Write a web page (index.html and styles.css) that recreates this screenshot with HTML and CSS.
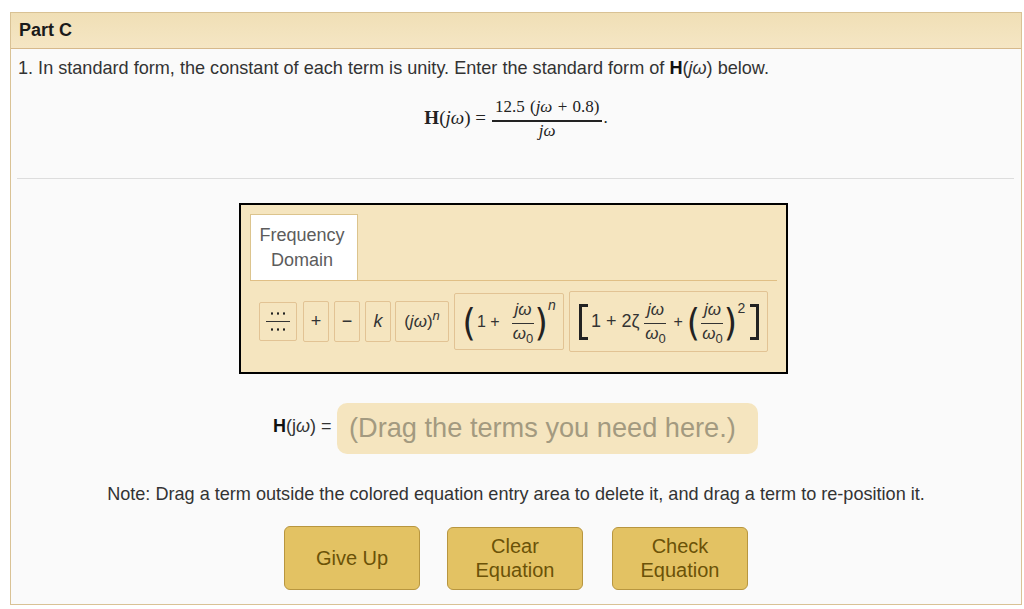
FILE: index.html
```html
<!DOCTYPE html>
<html lang="en">

<head>
  <meta charset="UTF-8">
  <meta name="viewport" content="width=device-width, initial-scale=1.0">
  <title>Part C</title>
  <link rel="stylesheet" href="styles.css">
</head>

<body>
  <div class="panel">
    <div class="panelhead">Part C</div>

    <p class="question">1. In standard form, the constant of each term is unity. Enter the standard form of <b>H</b>(<i>jω</i>) below.</p>

    <div class="formula">
      <span class="formula-left"><b>H</b>(<i>jω</i>) =</span>
      <span class="formula-frac">
        <span class="formula-num">12.5 (<i>jω</i> + 0.8)</span>
        <span class="formula-den"><i>jω</i></span>
      </span>
      <span class="formula-dot">.</span>
    </div>

    <hr class="divider">

    <div class="toolarea">
      <div class="tabrow">
        <div class="tab">Frequency<br>Domain</div>
      </div>
      <div class="terms">
        <div class="term term-blank">
          <span class="dots"></span>
          <span class="dotline"></span>
          <span class="dots"></span>
        </div>
        <div class="term term-small">+</div>
        <div class="term term-small">−</div>
        <div class="term term-small"><i>k</i></div>
        <div class="term term-jw"><span>(<i>jω</i>)<sup><i>n</i></sup></span></div>

        <div class="term term-big term-one">
          <span class="paren paren-open">(</span>
          <span class="plain-one">1 +</span>
          <span class="frac"><span class="top"><i>jω</i></span><span class="bottom"><i>ω</i><sub>0</sub></span></span>
          <span class="paren paren-close">)</span>
          <span class="power"><i>n</i></span>
        </div>

        <div class="term term-big term-two">
          <span class="bracket bracket-open"></span>
          <span class="plain">1 + 2ζ</span>
          <span class="frac"><span class="top"><i>jω</i></span><span class="bottom"><i>ω</i><sub>0</sub></span></span>
          <span class="plain-plus">+</span>
          <span class="paren paren-open">(</span>
          <span class="frac"><span class="top"><i>jω</i></span><span class="bottom"><i>ω</i><sub>0</sub></span></span>
          <span class="paren paren-close">)</span>
          <span class="power">2</span>
          <span class="bracket bracket-close"></span>
        </div>
      </div>
    </div>

    <div class="answer">
      <span class="answer-label"><b>H</b>(j<i>ω</i>) =</span>
      <div class="dropzone">(Drag the terms you need here.)</div>
    </div>

    <p class="note">Note: Drag a term outside the colored equation entry area to delete it, and drag a term to re-position it.</p>

    <div class="buttonarea">
      <button class="btn btn-giveup" type="button">Give Up</button>
      <button class="btn btn-two" type="button">Clear<br>Equation</button>
      <button class="btn btn-two" type="button">Check<br>Equation</button>
    </div>
  </div>
</body>

</html>
```

FILE: styles.css
```css
html,
body {
  height: 100%;
}

body {
  margin: 0;
  padding: 12px 2px 4px 10px;
  box-sizing: border-box;
  background-color: #ffffff;
  font-family: "Liberation Sans", Arial, sans-serif;
  color: #333333;
  overflow: hidden;
}

.panel {
  height: 593px;
  box-sizing: border-box;
  border: 1px solid #d9c295;
  background-color: #fafafa;
}

.panelhead {
  height: 36px;
  box-sizing: border-box;
  padding: 8px 8px 0;
  font-size: 18px;
  line-height: 18px;
  font-weight: bold;
  color: #1a1a1a;
  background-image: linear-gradient(to bottom, #f0dfb6, #f5e6c4);
  border-bottom: 1px solid #d6b98c;
}

.question {
  margin: 0;
  padding: 9px 7px 0;
  font-size: 18.1px;
  line-height: 20px;
  color: #333333;
}

.question b {
  color: #111111;
}

.formula {
  display: flex;
  justify-content: center;
  align-items: center;
  margin-top: 18px;
  height: 44px;
  font-family: "Liberation Serif", "Times New Roman", serif;
  font-size: 17px;
  color: #222222;
}

.formula-left {
  margin-right: 6px;
  font-size: 19px;
}

.formula-frac {
  display: flex;
  flex-direction: column;
  align-items: center;
  line-height: 20px;
}

.formula-num {
  padding: 0 3px 3px;
  border-bottom: 2px solid #222222;
  word-spacing: 1px;
}

.formula-den {
  line-height: 18px;
}

.formula-dot {
  margin-left: 1px;
}

.divider {
  height: 1px;
  margin: 38px 7px 0 6px;
  border: none;
  background-color: #dddddd;
}

.toolarea {
  width: 549px;
  height: 171px;
  box-sizing: border-box;
  margin: 24px 0 0 228px;
  padding: 9px 9px 0;
  border: 2px solid #000000;
  background-color: #f5e5bf;
}

.tabrow {
  border-bottom: 1px solid #e0bf85;
  height: 66px;
}

.tab {
  width: 108px;
  height: 66px;
  box-sizing: border-box;
  border: 1px solid #dcc48d;
  border-bottom: none;
  background-color: #ffffff;
  font-size: 18px;
  line-height: 25px;
  text-align: center;
  padding: 8px 4px 0 0;
  color: #5c5c5c;
}

.terms {
  display: flex;
  align-items: center;
  height: 81px;
  padding-left: 9px;
  color: #333333;
}

.term {
  display: flex;
  align-items: center;
  justify-content: center;
  box-sizing: border-box;
  height: 41px;
  border: 1px solid #e2c394;
  border-radius: 2px;
  font-size: 18px;
  flex-shrink: 0;
}

.term-blank {
  flex-direction: column;
  width: 38px;
  height: 39px;
  margin-right: 6px;
}

.dots {
  width: 18px;
  height: 3px;
  background-image: radial-gradient(circle, #222222 1px, transparent 1.3px);
  background-size: 6px 3px;
}

.dotline {
  width: 24px;
  height: 1px;
  margin: 6px 0;
  background-color: #333333;
}

.term-small {
  width: 26px;
  margin-right: 5px;
}

.term-jw {
  width: 54px;
  margin-left: -1px;
  font-size: 17px;
}

.term-jw sup {
  font-size: 13px;
  line-height: 0;
}

.term-big {
  justify-content: flex-start;
  font-size: 16px;
  color: #333333;
}

.term-one {
  width: 110px;
  height: 57px;
  margin-left: 5px;
  padding-left: 10px;
}

.term-two {
  width: 199px;
  height: 61px;
  margin-left: 5px;
  padding-left: 9px;
}

.paren {
  display: flex;
  justify-content: center;
  width: 10px;
  font-family: "DejaVu Sans", sans-serif;
  font-size: 34px;
  line-height: 40px;
  color: #222222;
  transform: scaleY(1.1);
}

.term-one .paren-open {
  width: 8px;
}

.plain {
  white-space: nowrap;
  margin: 0 5px 0 3px;
  font-size: 18px;
}

.plain-one {
  white-space: nowrap;
  width: 21px;
  margin: 0 14px 0 4px;
}

.plain-plus {
  width: 8px;
  margin: 0 7px;
}

.frac {
  display: flex;
  flex-direction: column;
  align-items: center;
  width: 22px;
  font-size: 17px;
  line-height: 20px;
}

.frac .top {
  padding-bottom: 3px;
  border-bottom: 1px solid #333333;
  width: 100%;
  text-align: center;
}

.frac sub {
  font-size: 13px;
  line-height: 0;
}

.frac + .paren-close {
  margin-left: 2px;
}

.paren-open + .frac {
  margin-left: 3px;
}

.power {
  align-self: flex-start;
  width: 8px;
  margin: 3px 0 0 2px;
  font-size: 14px;
}

.term-two .power {
  margin-top: 8px;
}

.bracket {
  display: block;
  width: 9px;
  height: 36px;
  box-sizing: border-box;
  border: 3px solid #222222;
  flex-shrink: 0;
}

.bracket-open {
  border-right: none;
}

.bracket-close {
  border-left: none;
  margin-left: 5px;
}

.answer {
  display: flex;
  align-items: center;
  margin: 29px 0 0 262px;
}

.answer-label {
  width: 64px;
  margin-bottom: 5px;
  font-size: 18px;
  color: #333333;
}

.answer-label b {
  color: #111111;
}

.dropzone {
  width: 421px;
  height: 51px;
  box-sizing: border-box;
  padding: 0 12px;
  border-radius: 10px;
  background-color: #f5e5bf;
  font-size: 27.2px;
  line-height: 50px;
  color: #a39a80;
}

.note {
  margin: 30px 0 0;
  text-align: center;
  font-size: 18.1px;
  line-height: 20px;
  color: #333333;
}

.buttonarea {
  display: flex;
  align-items: flex-end;
  margin: 22px 0 0 273px;
}

.btn {
  width: 136px;
  height: 63px;
  padding: 0;
  border: 1px solid #b8963f;
  border-radius: 6px;
  background-color: #e3c263;
  font-family: "Liberation Sans", Arial, sans-serif;
  font-size: 20px;
  line-height: 24px;
  color: #6b5208;
  margin-right: 27px;
}

.btn-two {
  padding-bottom: 2px;
}

.btn + .btn + .btn {
  margin-left: 2px;
}

.btn-giveup {
  height: 64px;
}
```
